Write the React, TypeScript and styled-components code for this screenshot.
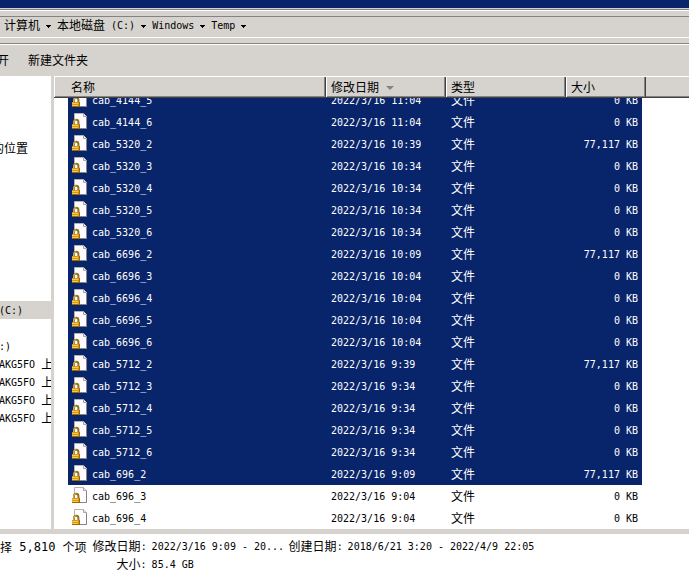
import React from "react";
import styled, { createGlobalStyle } from "styled-components";

const FACE = "#d6d3ce";
const NAVY = "#08246b";
const SHADOW = "#848284";
const DARK = "#424142";

const GlobalStyle = createGlobalStyle`
  * { box-sizing: border-box; }
  body {
    margin: 0;
    background: #fff;
    color: #000;
    font: 10px/18px "DejaVu Sans Mono", "Noto Sans CJK SC", monospace;
  }
  button { font: inherit; color: inherit; }
`;

const Window = styled.div`
  display: flex;
  flex-direction: column;
  height: 100vh;
  overflow: hidden;
  white-space: pre;
`;

const TitleStrip = styled.header`
  flex: none;
  height: 9px;
  background: ${NAVY};
  border-bottom: 1px solid ${FACE};
`;

const AddressBand = styled.div`
  flex: none;
  padding: 5px 0;
  background: ${FACE};
  border-top: 1px solid ${SHADOW};
  border-bottom: 1px solid ${SHADOW};
  box-shadow: inset 0 1px #fff;
`;

const AddressBar = styled.nav`
  display: flex;
  align-items: center;
  height: 22px;
  margin-top: 1px;
  padding: 0 4px 2px;
  border-top: 1px solid ${SHADOW};
  border-bottom: 1px solid #fff;
`;

const Crumb = styled.button`
  display: flex;
  align-items: center;
  gap: 6px;
  padding: 0;
  margin-right: 6px;
  border: 0;
  background: none;
`;

const CommandBar = styled.div`
  flex: none;
  display: flex;
  align-items: center;
  gap: 19px;
  height: 32px;
  margin-left: -15px;
  background: ${FACE};
  border-top: 1px solid #fff;
`;

const Command = styled.button`
  padding: 0;
  border: 0;
  background: none;
`;

const Cjk = styled.span`
  font: 12px/12px "Noto Sans CJK SC", sans-serif;
  vertical-align: -1px;
`;

const Content = styled.main`
  flex: 1;
  display: flex;
  min-height: 0;
`;

const Sidebar = styled.nav`
  flex: none;
  width: 54px;
  padding-top: 63px;
  overflow: hidden;
  border-right: 3px solid ${FACE};
`;

const Places = styled.div`
  margin-bottom: 144px;
`;

const Place = styled.a<{ $current?: boolean; $indent?: number; $gap?: boolean }>`
  display: block;
  height: 18px;
  margin-left: -8px;
  margin-bottom: ${(p) => (p.$gap ? 18 : 0)}px;
  padding-top: 1px;
  padding-left: ${(p) => p.$indent ?? 0}px;
  color: inherit;
  text-decoration: none;
  background: ${(p) => (p.$current ? FACE : "transparent")};
`;

const FileTable = styled.table`
  flex: 1;
  display: flex;
  flex-direction: column;
  min-width: 0;
`;

const Head = styled.thead`
  flex: none;
  display: block;
`;

const HeadRow = styled.tr`
  display: grid;
  grid-template-columns: 272px 120px 120px 80px 1fr;
  height: 22px;
  background: ${FACE};
  border-top: 1px solid #fff;
  border-bottom: 1px solid ${DARK};
`;

const HeadCell = styled.th<{ $indent?: number }>`
  display: flex;
  padding: 2px 0 0 ${(p) => p.$indent ?? 4}px;
  font-weight: normal;
  border-left: 1px solid #fff;
  border-right: 1px solid ${DARK};
  box-shadow: inset -1px -1px ${SHADOW};
  &:last-child {
    border-left: 0;
    border-right: 0;
    box-shadow: inset 0 -1px ${SHADOW};
  }
`;

const SortButton = styled.button`
  display: flex;
  align-items: center;
  gap: 7px;
  padding: 0;
  border: 0;
  background: none;
`;

const Body = styled.tbody`
  flex: 1;
  display: flex;
  flex-direction: column;
  justify-content: flex-end;
  min-height: 0;
  overflow: hidden;
`;

const FileRow = styled.tr<{ $selected: boolean }>`
  flex: none;
  display: grid;
  grid-template-columns: 258px 120px 120px 76px;
  width: 574px;
  height: 22px;
  margin-left: 14px;
  color: ${(p) => (p.$selected ? "#fff" : "#000")};
  background: ${(p) => (p.$selected ? NAVY : "transparent")};
`;

const Cell = styled.td<{ $right?: boolean }>`
  display: flex;
  align-items: center;
  gap: 4px;
  padding: 2px 4px 0 5px;
  justify-content: ${(p) => (p.$right ? "flex-end" : "flex-start")};
`;

const NameCell = styled(Cell)`
  padding-left: 4px;
`;

const Details = styled.footer`
  flex: none;
  display: flex;
  gap: 6px;
  height: 53px;
  padding-top: 4px;
  border-top: 5px solid ${FACE};
`;

const Count = styled.div`
  margin-left: -12px;
  font-size: 12px;
`;

const Facts = styled.dl`
  display: grid;
  grid-template-columns: 54px 132px 54px auto;
  grid-auto-rows: 18px;
  column-gap: 5px;
  margin: 0;
`;

const Label = styled.dt`
  text-align: right;
`;

const Value = styled.dd`
  margin: 0;
`;

/* Han runs are set two pixels larger than the Latin text around them. */
const Text = ({ children }: { children: string }) => (
  <span>
    {children.split(/([\u4e00-\u9fff]+)/).map((run, i) =>
      i % 2 ? <Cjk key={i}>{run}</Cjk> : run
    )}
  </span>
);

const Arrow = () => (
  <svg width="5" height="3" viewBox="0 0 5 3" shapeRendering="crispEdges" aria-hidden="true">
    <path d="M0 0h5v1H4v1H3v1H2V2H1V1H0z" />
  </svg>
);

const SortArrow = () => (
  <svg width="8" height="4" viewBox="0 0 8 4" aria-hidden="true">
    <path d="M0 0h8L4 4z" fill={SHADOW} />
  </svg>
);

const LockedFile = () => (
  <svg width="16" height="20" viewBox="0 0 16 20" aria-hidden="true">
    <path d="M2.5 .5h9l3 3v12h-12z" fill="#fffbff" stroke="#b5b2b5" />
    <path d="M14.5 4v11.5H8" fill="none" stroke="#848684" />
    <path d="M11.5 .5v3h3" fill="#e7e7e7" stroke="#a5a6a5" />
    <path d="M2 12V9q0-2.2 2.2-2.2T6.4 9v3" fill="none" stroke="#94711c" strokeWidth="2" />
    <path d="M1.8 11.5V9q0-2.2 2.2-2.2" fill="none" stroke="#dec373" />
    <rect x="0" y="11" width="8" height="5" fill="#d69a18" />
    <path d="M0 12.5h6M0 14.5h6" stroke="#f7c74a" />
    <path d="M7.5 11v5M0 15.5h8" stroke="#9c6900" />
  </svg>
);

const crumbs = ["计算机", "本地磁盘 (C:)", "Windows", "Temp"];
const drives = ["AKG5FO 上", "AKG5FO 上", "AKG5FO 上", "AKG5FO 上"];

const files: [string, string, string][] = [
  ["cab_4144_5", "11:04", "0"],
  ["cab_4144_6", "11:04", "0"],
  ["cab_5320_2", "10:39", "77,117"],
  ["cab_5320_3", "10:34", "0"],
  ["cab_5320_4", "10:34", "0"],
  ["cab_5320_5", "10:34", "0"],
  ["cab_5320_6", "10:34", "0"],
  ["cab_6696_2", "10:09", "77,117"],
  ["cab_6696_3", "10:04", "0"],
  ["cab_6696_4", "10:04", "0"],
  ["cab_6696_5", "10:04", "0"],
  ["cab_6696_6", "10:04", "0"],
  ["cab_5712_2", "9:39", "77,117"],
  ["cab_5712_3", "9:34", "0"],
  ["cab_5712_4", "9:34", "0"],
  ["cab_5712_5", "9:34", "0"],
  ["cab_5712_6", "9:34", "0"],
  ["cab_696_2", "9:09", "77,117"],
  ["cab_696_3", "9:04", "0"],
  ["cab_696_4", "9:04", "0"],
];
const unselected = ["cab_696_3", "cab_696_4"];

export default function App() {
  return (
    <Window>
      <GlobalStyle />
      <TitleStrip />
      <AddressBand>
        <AddressBar>
          {crumbs.map((name) => (
            <Crumb key={name}>
              <Text>{name}</Text>
              <Arrow />
            </Crumb>
          ))}
        </AddressBar>
      </AddressBand>
      <CommandBar>
        <Command><Text>打开</Text></Command>
        <Command><Text>新建文件夹</Text></Command>
      </CommandBar>
      <Content>
        <Sidebar>
          <Places>
            <Place href="#places"><Text>的位置</Text></Place>
          </Places>
          <Place href="#c" $current $gap $indent={7}>(C:)</Place>
          <Place href="#d" $indent={7}>:)</Place>
          {drives.map((name, i) => (
            <Place key={i} href={`#drive${i}`} $indent={7}><Text>{name}</Text></Place>
          ))}
        </Sidebar>
        <FileTable>
          <Head>
            <HeadRow>
              <HeadCell $indent={16}><SortButton><Text>名称</Text></SortButton></HeadCell>
              <HeadCell><SortButton><Text>修改日期</Text><SortArrow /></SortButton></HeadCell>
              <HeadCell><SortButton><Text>类型</Text></SortButton></HeadCell>
              <HeadCell><SortButton><Text>大小</Text></SortButton></HeadCell>
              <HeadCell />
            </HeadRow>
          </Head>
          <Body>
            {files.map(([name, time, size]) => (
              <FileRow key={name} $selected={!unselected.includes(name)}>
                <NameCell><LockedFile />{name}</NameCell>
                <Cell>{`2022/3/16 ${time}`}</Cell>
                <Cell><Text>文件</Text></Cell>
                <Cell $right>{`${size} KB`}</Cell>
              </FileRow>
            ))}
          </Body>
        </FileTable>
      </Content>
      <Details>
        <Count><Text>选择 5,810 个项</Text></Count>
        <Facts>
          <Label><Text>修改日期:</Text></Label>
          <Value>2022/3/16 9:09 - 20...</Value>
          <Label><Text>创建日期:</Text></Label>
          <Value>2018/6/21 3:20 - 2022/4/9 22:05</Value>
          <Label><Text>大小:</Text></Label>
          <Value>85.4 GB</Value>
        </Facts>
      </Details>
    </Window>
  );
}
